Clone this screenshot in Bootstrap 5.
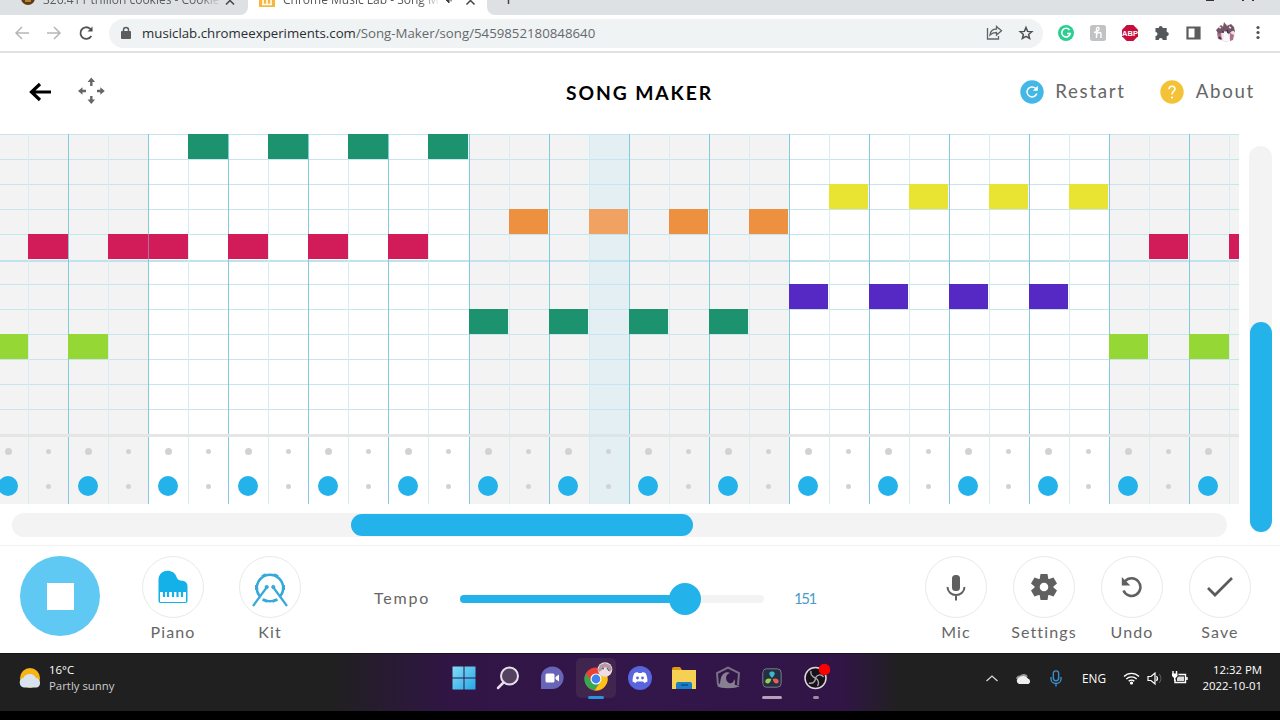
<!DOCTYPE html>
<html lang="en">
<head>
<meta charset="utf-8">
<meta name="viewport" content="width=device-width, initial-scale=1">
<title>Chrome Music Lab - Song Maker</title>
<link href="https://cdn.jsdelivr.net/npm/bootstrap@5.3.0/dist/css/bootstrap.min.css" rel="stylesheet">
<style>
:root { --sky:#23b2ea; --ink:#666; --track:#f3f3f3; }
body { width:1280px; height:720px; overflow:hidden; background:#000; font-family:"Lato","Open Sans",sans-serif; color:var(--ink); line-height:1; }
svg { display:block; flex:none; }
/* browser chrome */
.tabstrip { height:15px; background:#fff; font:12px/16px "Open Sans",sans-serif; color:#5a5d60; }
.tabstrip > div { height:15px; }
.tab-a { width:248px; padding-left:21px; border-radius:0 0 8px 0; background:#dee1e4; }
.tab-b { width:239px; background:#fff; padding-left:11px; color:#55585b; }
.tab-c { background:#dee1e4; border-radius:0 0 0 8px; padding-left:16px; }
.tab-title { height:24px; margin-top:-8.5px; overflow:hidden; white-space:nowrap; -webkit-mask-image:linear-gradient(90deg,#000 88%,transparent); }
.toolbar { height:38px; background:#fff; border-bottom:2px solid #e0e1e2; }
.omnibox { width:934px; height:29px; background:#f0f3f4; margin-left:13px; padding:0 8px 0 11px; font:13.25px/29px "Open Sans",sans-serif; color:#66696c; }
.omnibox b { font-weight:400; color:#2c2e30; }
/* app */
.app-head { height:81px; background:#fff; padding:0 25px 6px 28px; }
.app-title { color:#000; font-size:19.3px; font-weight:700; letter-spacing:1.9px; margin-left:460px; margin-top:5px; }
.head-link { font-size:18.7px; letter-spacing:1.7px; margin-top:3px; }
.restart { margin:-1px 34px 0 11px; }
.about { margin:-1px 0 0 12px; }
.song { height:411px; background:#fff; }
.stage { width:1239px; }
.roll { position:relative; height:370px; overflow:hidden; }
.cells { display:grid; margin-left:-11.7px; width:1281px; grid-template-columns:repeat(32,40.02px); grid-template-rows:repeat(12,25px) 2.5px 35px 32.5px; height:370px; }
.bar-shade { grid-row:1/-1; background:#f3f3f3; }
.row-line { grid-column:1/-1; border-top:1px solid #c6e6ee; height:1px; }
.row-line.octave { border-top:2px solid #bfe2ee; height:2px; margin-top:1px; }
.row-line.split { border-top:3px solid #e5e5e5; height:3px; }
.beat { grid-row:1/-1; width:1px; background:#d6edf2; }
.beat.strong { background:#83cbdc; }
.note { margin:.3px .3px 0 0; }
.playhead { grid-row:1/-1; background:rgba(190,229,247,.28); }
.dot { border-radius:50%; background:#d2d2d2; align-self:center; justify-self:center; }
.hit { width:20px; height:20px; background:var(--sky); }
.dot-l { width:7px; height:7px; } .dot-s { width:5px; height:5px; }
.hbar { width:1215px; height:24px; margin:9px 0 0 12px; background:var(--track); padding:1px 0 1px 339px; }
.hbar div { width:342px; height:22px; background:var(--sky); }
.vbar { width:23px; height:386px; margin:12px 0 0 10px; background:var(--track); padding:176px .5px 0; }
.vbar div { height:210px; background:var(--sky); }
.controls { height:108px; background:#fff; border-top:1px solid #f1f1f1; padding:10px 29px 0 20px; }
.stop { width:80px; height:80px; background:#60c9f3; }
.stop div { width:27px; height:27px; background:#fff; }
.tool { width:62px; font-size:16px; letter-spacing:1.15px; white-space:nowrap; }
.ring { width:62px; height:62px; border:1px solid #e9e9e9; margin-bottom:6px; }
.tempo { font-size:16px; letter-spacing:1.8px; height:86px; margin-left:73px; }
.tempo-name { width:86px; margin-top:-3px; }
.bpm { color:#4a9cc9; font-size:15px; margin:-1px 0 0 30px; letter-spacing:-1.5px; }
.slider { position:relative; width:304px; height:8px; background:var(--track); }
.slider .fill { height:8px; background:var(--sky); }
.slider .knob { position:absolute; top:-12px; width:32px; height:32px; background:var(--sky); }
/* Windows taskbar */
.taskbar { height:58px; color:#fff; font:11.4px/16px "Open Sans",sans-serif; background:linear-gradient(90deg,#202020 330px,#301545 450px,#33164a 640px,#311547 840px,#202020 900px); border-top:1px solid #181318; padding-bottom:10px; }
.weather { width:441.5px; padding-left:19px; }
.app { position:relative; width:44.1px; height:40px; }
.app.live { background:#40254f; border-radius:5px; width:40.1px; margin:0 2px; }
.under { position:absolute; bottom:-1px; left:50%; height:3px; border-radius:2px; transform:translateX(-50%); }
.clock { width:74px; }
.tray { padding-right:18px; }
.lang { margin:0 16px 0 17px; font-size:11.8px; }
</style>
</head>
<body class="d-flex flex-column">

<div class="tabstrip d-flex flex-shrink-0">
  <div class="tab-a d-flex overflow-hidden">
    <svg width="14" height="6" viewBox="0 0 14 6"><path d="M0-2a7 7 0 0 0 14 0z" fill="#5b3b18"/><path d="M4 0h6v2H4z" fill="#b98231"/></svg>
    <span class="tab-title ms-2" style="width:178px">326.411 trillion cookies - Cookie</span>
    <svg width="14" height="7" viewBox="-2 0 14 7"><path d="M3 4.500l4-4 4 4" fill="none" stroke="#444" stroke-width="1.500"/></svg>
  </div>
  <div class="tab-b d-flex overflow-hidden">
    <svg width="16" height="8" viewBox="0 0 16 8"><path d="M0 0h16v7H0z" fill="#f5b83d"/><path d="M3 4.500h10M4 0v4M8 0v4M12 0v4" stroke="#fff" stroke-width="1.500"/></svg>
    <span class="tab-title ms-2" style="width:157px">Chrome Music Lab - Song M</span>
    <svg class="ms-1" width="34" height="7" viewBox="0 0 34 7"><path d="M2 0h3v3zM7 0v1.500" fill="#333" stroke="#444"/><path d="M22.500 4.500l4-4 4 4" fill="none" stroke="#444" stroke-width="1.500"/></svg>
  </div>
  <div class="tab-c flex-grow-1 d-flex">
    <svg width="770" height="6" viewBox="0 0 770 6"><path d="M5.500 0v4" stroke="#444" stroke-width="1.500"/><path d="M703 0h8M740 0v1M750 0v1" stroke="#333" stroke-width="2"/></svg>
  </div>
</div>

<div class="toolbar d-flex align-items-center flex-shrink-0">
  <svg width="96" height="20" viewBox="0 0 96 20" fill="none" stroke="#b4b6b8" stroke-width="1.500"><path d="M29 10H16m6-6-6 6 6 6M47 10h13m-6-6 6 6-6 6"/><path d="M91.300 13A5.800 5.800 0 1 1 90 5.600l2 2" stroke="#505356" stroke-width="1.800"/><path d="M92.500 3.500v5h-5z" fill="#505356" stroke="none"/></svg>
  <div class="omnibox rounded-pill d-flex align-items-center">
    <svg width="12" height="14" viewBox="0 0 12 14" style="margin-right:10px"><path d="M2 5h8a1 1 0 0 1 1 1v6a1 1 0 0 1-1 1H2a1 1 0 0 1-1-1V6a1 1 0 0 1 1-1z" fill="#5a5d60"/><path d="M3.500 6V4a2.500 2.500 0 0 1 5 0v2" fill="none" stroke="#5a5d60" stroke-width="1.500"/></svg>
    <span class="url"><b>musiclab.chromeexperiments.com</b>/Song-Maker/song/5459852180848640</span>
    <svg class="ms-auto" width="50" height="18" viewBox="0 0 50 18" fill="none" stroke="#606366" stroke-width="1.300"><path d="M2.500 4v11h11v-3M5 11c.500-4 3-6 6.500-6V2.500l5 4.300-5 4.200V8.500C9 8.500 7 9 5 11z"/><path d="M41 3.500l1.600 3.900 4.200.3-3.200 2.700 1 4.100-3.600-2.200-3.600 2.200 1-4.100-3.200-2.700 4.200-.3z" stroke="#4d5053" stroke-width="1.500"/></svg>
  </div>
  <svg class="ms-auto" width="222" height="24" viewBox="1058 22 222 24">
    <circle cx="1066" cy="34" r="8" fill="#2cce91"/><path d="M1069.500 31a4.300 4.300 0 1 0 .8 3.500h-3.300" fill="none" stroke="#fff" stroke-width="1.500"/>
    <rect x="1090" y="26" width="16" height="16" rx="2.500" fill="#c1c2c3"/><path d="M1096.500 39v-9c0-2.500 3-2 2.500 0-.500 2-3 3-5 3.500M1096.500 35c2-2 4.500-2 4.500 0v4" fill="none" stroke="#fff" stroke-width="1.400"/>
    <path d="M1126.700 26h6.600l4.700 4.700v6.600l-4.700 4.700h-6.600l-4.700-4.700v-6.600z" fill="#c70d3c"/><text x="1130" y="37" font-size="7.500" font-weight="700" fill="#fff" text-anchor="middle" font-family="Liberation Sans">ABP</text>
    <path d="M1155.500 29h3.200a2 2 0 1 1 4 0h4v4a2 2 0 1 1 0 4.200V41h-4a2 2 0 1 0-4 0h-3.200v-4a2 2 0 1 0 0-4z" fill="#55585a"/>
    <path d="M1187.500 28.500h12v11h-12z" fill="none" stroke="#5a5c5e" stroke-width="2.200"/><path d="M1194.500 28h5v12h-5z" fill="#5a5c5e"/>
    <g><circle cx="1226" cy="34" r="9" fill="#f0dfe5"/><path d="M1216 31l5-5 2 2 1-5 3 4 4-2 3 3 1 5-3-1-3 3-5-3-5 4z" fill="#745466"/><path d="M1217 34l4 1 1 6-4-1zM1230 34l4 2-1 5-3 1z" fill="#ad7088"/><path d="M1224 33l3-1 3 10h-7z" fill="#f8f6ff"/><path d="M1219 28l2 1M1229 28l2 1M1233 32l1 2" stroke="#f3dbe3" stroke-width="1.500"/><path d="M1222 33h2M1227 31l1 3M1219 38l2 2" stroke="#352a42" stroke-width="1.500"/></g>
    <g fill="#505356"><circle cx="1258" cy="28.500" r="1.600"/><circle cx="1258" cy="33.500" r="1.600"/><circle cx="1258" cy="38.500" r="1.600"/></g>
  </svg>
</div>

<header class="app-head d-flex align-items-center flex-shrink-0">
  <svg width="78" height="32" viewBox="28 75 78 32" fill="none"><path d="M51 92H32m8-8-8.500 8 8.500 8" stroke="#000" stroke-width="3.200"/><g stroke="#666" stroke-width="2.400"><path d="M91.300 86v-6M91.300 96v6M86 91h-5M97 91h5"/></g><path d="M91.300 77.500l3.800 4.500h-7.600zM91.300 104l-3.800-4.500h7.600zM78 91l4.500-3.800v7.600zM104.800 91l-4.500-3.800v7.600z" fill="#666"/></svg>
  <div class="app-title">SONG MAKER</div>
  <div class="ms-auto d-flex align-items-center head-link">
    <svg width="24" height="24" viewBox="0 0 24 24"><circle cx="12" cy="12" r="11.700" fill="#43b7e6"/><path d="M16.800 13.500A5 5 0 1 1 15.500 8.300" fill="none" stroke="#fff" stroke-width="1.500"/><path d="M17.800 5.800v5h-5z" fill="#fff"/></svg>
    <span class="restart">Restart</span>
    <svg width="24" height="24" viewBox="0 0 24 24"><circle cx="12" cy="12" r="11.700" fill="#f4c236"/><path d="M9 9.300c0-4 6-4 6-.6 0 2.600-3 2.600-3 5.800" fill="none" stroke="#fff" stroke-width="1.600"/><circle cx="12" cy="17.500" r="1.100" fill="#fff"/></svg>
    <span class="about">About</span>
  </div>
</header>

<main class="song d-flex flex-shrink-0">
  <div class="stage">
    <div class="roll"><div class="cells" id="cells"></div></div>
    <div class="hbar rounded-pill"><div class="rounded-pill"></div></div>
  </div>
  <div class="vbar rounded-pill"><div class="rounded-pill"></div></div>
</main>

<section class="controls d-flex flex-shrink-0">
  <div class="stop rounded-circle d-flex align-items-center justify-content-center"><div></div></div>
  <div class="d-flex" style="gap:35px;margin-left:42px">
    <div class="tool d-flex flex-column align-items-center"><div class="ring rounded-circle d-flex align-items-center justify-content-center">
      <svg width="32" height="34" viewBox="0 0 32 34"><path d="M1.500 31V10C1.500-1.500 17-2 19.500 7c1 3 3 3.500 6 3.700 3 .3 5 2.300 5 5.300v15a2 2 0 0 1-2 2h-25a2 2 0 0 1-2-2z" fill="#14b1e8"/><path d="M3 22h26v10H3z" fill="#fff"/><path d="M7 22v5M11 22v5M16 22v5M20.500 22v5M25 22v5" stroke="#14b1e8" stroke-width="2.200"/></svg></div>Piano</div>
    <div class="tool d-flex flex-column align-items-center"><div class="ring rounded-circle d-flex align-items-center justify-content-center">
      <svg style="margin-top:3px" width="38" height="36" viewBox="0 0 38 36" fill="none" stroke="#36a9da"><path d="M8.500 25A13.200 13.200 0 1 1 29.500 25M12.500 28.500a13.200 13.200 0 0 0 13 0" stroke-width="2.500"/><path d="M11.500 28.500l5 2M26.500 28.500l-5 2M11 5.500l4-2M27 5.500l-4-2M5.300 14v5M32.700 14v5" stroke-width="2.600"/><path d="M2 35L16 16M36 35L22 16" stroke-width="2.200"/><circle cx="15.700" cy="16" r="1.600" fill="#36a9da"/><circle cx="22.300" cy="16" r="1.600" fill="#36a9da"/></svg></div>Kit</div>
  </div>
  <div class="tempo d-flex align-items-center">
    <span class="tempo-name">Tempo</span>
    <div class="slider rounded-pill"><div class="fill rounded-pill" style="width:225px"></div><div class="knob rounded-circle" style="left:209px"></div></div>
    <span class="bpm">151</span>
  </div>
  <div class="ms-auto d-flex" style="gap:26px">
    <div class="tool d-flex flex-column align-items-center"><div class="ring rounded-circle d-flex align-items-center justify-content-center">
      <svg style="margin-top:2px" width="20" height="26" viewBox="0 0 20 26"><rect x="6" y="0" width="8" height="16" rx="3.500" fill="#606060"/><path d="M1.500 12a8.500 8 0 0 0 17 0M10 20v5.500" fill="none" stroke="#606060" stroke-width="2"/></svg></div>Mic</div>
    <div class="tool d-flex flex-column align-items-center"><div class="ring rounded-circle d-flex align-items-center justify-content-center">
      <svg width="26" height="26" viewBox="0 0 26 26"><g fill="#606060"><path id="tooth" d="M9.500 0h7l1 6h-9zM9.500 26h7l1-6h-9z"/><use href="#tooth" transform="rotate(60 13 13)"/><use href="#tooth" transform="rotate(120 13 13)"/></g><circle cx="13" cy="13" r="6.800" fill="none" stroke="#606060" stroke-width="5"/></svg></div>Settings</div>
    <div class="tool d-flex flex-column align-items-center"><div class="ring rounded-circle d-flex align-items-center justify-content-center">
      <svg width="22" height="22" viewBox="0 0 22 22"><path d="M2.500 14.500A8.800 8.800 0 1 0 4 5.300" fill="none" stroke="#606060" stroke-width="2.500"/><path d="M.8 1v8.500h8.500z" fill="#606060"/></svg></div>Undo</div>
    <div class="tool d-flex flex-column align-items-center"><div class="ring rounded-circle d-flex align-items-center justify-content-center">
      <svg width="26" height="20" viewBox="0 0 26 20"><path d="M1 11l7 7L25 1" fill="none" stroke="#5a5a5a" stroke-width="2.700"/></svg></div>Save</div>
  </div>
</section>

<footer class="taskbar d-flex align-items-center flex-shrink-0">
  <div class="weather d-flex align-items-center">
    <svg width="24" height="22" viewBox="0 0 24 22"><circle cx="11" cy="11" r="10" fill="#f7b416"/><path d="M5 20.500a5 5 0 0 1-.5-9.800A7 7 0 0 1 17 11a5 5 0 0 1 1 9.500z" fill="#d9e2ef"/></svg>
    <div style="margin-left:6px">16°C<br><span style="color:#ccc">Partly sunny</span></div>
  </div>
  <div class="app d-flex align-items-center justify-content-center"><svg width="24" height="24" viewBox="0 0 24 24"><defs><linearGradient id="win" x2="1" y2="1"><stop stop-color="#83dcf8"/><stop offset="1" stop-color="#26a7e5"/></linearGradient></defs><path d="M.5.500h11v11H.5zM12.500.500h11v11h-11zM.5 12.500h11v11H.5zM12.500 12.500h11v11h-11z" fill="url(#win)"/></svg></div>
  <div class="app d-flex align-items-center justify-content-center"><svg width="24" height="24" viewBox="0 0 24 24"><circle cx="13.500" cy="10" r="8.500" fill="#54415f" stroke="#e8dfeb" stroke-width="2"/><path d="M7.500 16.500L2 22" stroke="#e8dfeb" stroke-width="2.500" stroke-linecap="round"/></svg></div>
  <div class="app d-flex align-items-center justify-content-center"><svg width="24" height="24" viewBox="0 0 24 24"><path d="M1 23V12a11.300 11.300 0 1 1 11 11z" fill="#6864b8"/><rect x="5.500" y="7.500" width="9" height="9" rx="1.500" fill="#fff"/><path d="M15.500 11l3.500-2.500v7L15.500 13z" fill="#fff"/></svg></div>
  <div class="app live d-flex align-items-center justify-content-center"><svg width="34" height="34" viewBox="0 0 34 34"><circle cx="17" cy="18" r="11.500" fill="#e94335"/><path d="M7 12.200A11.500 11.500 0 0 0 15.500 29.400L21 20.500 17 18 12.500 21z" fill="#34a853"/><path d="M15.500 29.400A11.500 11.500 0 0 0 27.500 13H17l5 7z" fill="#fbc116"/><circle cx="17" cy="18" r="5.500" fill="#fff"/><circle cx="17" cy="18" r="4.400" fill="#3f83f0"/><circle cx="26" cy="8.500" r="7.300" fill="#eadfe3"/><path d="M19 9l2-5 5-2 5 2 2 4-2 3-3-4-2-1-3 3-3 2z" fill="#b797a3"/><path d="M23 7l2 1M28 7l2 3" stroke="#5d455b"/></svg><span class="under" style="width:16px;background:#2b92dc"></span></div>
  <div class="app d-flex align-items-center justify-content-center"><svg width="24" height="24" viewBox="0 0 24 24"><circle cx="12" cy="12" r="12" fill="#5865dd"/><path d="M4.500 15.500c0-3.500.8-6.500 2-8.500l3-1 .7 1h3.600l.7-1 3 1c1.200 2 2 5 2 8.500l-3 1.500-1.500-1.500h-6L7.500 17z" fill="#fff"/><circle cx="9.500" cy="12" r="1.400" fill="#5865dd"/><circle cx="14.500" cy="12" r="1.400" fill="#5865dd"/></svg></div>
  <div class="app d-flex align-items-center justify-content-center"><svg width="26" height="24" viewBox="0 0 26 24"><path d="M1 3a2 2 0 0 1 2-2h6l2 3H1z" fill="#d99b16"/><path d="M1 4h24v19H1z" fill="#f6d052"/><path d="M5 23v-5a2 2 0 0 1 2-2h12a2 2 0 0 1 2 2v5z" fill="#1a7fc7"/><path d="M10 19h7" stroke="#0c4e91" stroke-width="1.500"/></svg></div>
  <div class="app d-flex align-items-center justify-content-center"><svg width="26" height="24" viewBox="0 0 26 24"><path d="M3 19L2 7l11-5.500L24 7l-1 12" fill="none" stroke="#786f83" stroke-width="2"/><path d="M2 20c4-2 3-5 4-8 1-4 5-7 9-5-5 1-5 8-1 10 3 1 5-1 5-4 2 3 0 5 1 6l5 1c-5 3-19 3-23 0z" fill="#888092"/></svg></div>
  <div class="app d-flex align-items-center justify-content-center"><svg width="20" height="20" viewBox="0 0 20 20"><rect x=".8" y=".8" width="18.400" height="18.400" rx="4" fill="#223043" stroke="#807786"/><path d="M10 10C5 5 8 3.500 10 3.500S15 5 10 10z" fill="#40b6c9"/><path d="M9.300 11c-1 6-6 5-6 2.500s3-4 6-2.500z" fill="#98cf51"/><path d="M10.700 11c1 6 6 5 6 2.500s-3-4-6-2.500z" fill="#ef5b4e"/></svg><span class="under" style="width:20px;background:#b4a0bb"></span></div>
  <div class="app d-flex align-items-center justify-content-center"><svg width="28" height="32" viewBox="0 0 28 32"><circle cx="13.500" cy="16" r="10.500" fill="#17121a" stroke="#ddd7df" stroke-width="1.500"/><path d="M9 9c-1 4 2 6 4.500 7 0 4-3 6-6.500 5M13.500 16c2-4 6-4 8-1M13.500 16c3 2 4 5 2 8" fill="none" stroke="#aaa2ae" stroke-width="1.400"/><circle cx="22.500" cy="7.500" r="5.800" fill="#f00"/></svg><span class="under" style="width:6px;background:#9f8ba8"></span></div>

  <div class="tray ms-auto d-flex align-items-center">
    <svg width="80" height="24" viewBox="985 665 80 24"><path d="M986.500 680l5.500-5 5.500 5" fill="none" stroke="#ddd" stroke-width="1.200"/><path d="M1016 678a4 4 0 0 1 4-3.500 5 5 0 0 1 8 1z" fill="#999"/><path d="M1019 683a3.500 3.500 0 0 1 0-6.500 6 6 0 0 1 9 1 3 3 0 0 1 .5 5.500z" fill="#eee"/><rect x="1053.300" y="669.800" width="5.400" height="10" rx="2.700" fill="none" stroke="#3b93d4" stroke-width="1.300"/><path d="M1051 676v2a5 4.500 0 0 0 10 0v-2M1056 682.500v3" fill="none" stroke="#3b93d4" stroke-width="1.300"/></svg>
    <span class="lang">ENG</span>
    <svg width="66" height="20" viewBox="1122.500 667 66 20" fill="none" stroke="#fff" stroke-width="1.400"><path d="M1124.500 675.500a10.500 10.500 0 0 1 15 0M1126.800 678a7.500 7.500 0 0 1 10.400 0M1129.200 680.300a4 4 0 0 1 5.600 0"/><circle cx="1132" cy="682" r=".9" fill="#fff"/><path d="M1148.500 675.500h3l4-3.500v11l-4-3.500h-3z" stroke-width="1.200"/><path d="M1157 675c1.200 1.500 1.200 3.500 0 5" stroke-width="1.200"/><path d="M1159.500 673c2.500 2.500 2.500 6.500 0 9" stroke="#666" stroke-width="1"/><path d="M1179 673.500h7v8h-10.500v-3M1187.500 676v3" stroke-width="1.400"/><path d="M1179 675.500h5.500v4.500h-7v-3z" fill="#ddd" stroke="none"/><path d="M1173.500 670v3M1177 670v3M1175.200 676v4"/><path d="M1172.500 672.500h5.500v2.500l-2 2h-1.500l-2-2z" fill="#fff" stroke="none"/></svg>
    <div class="clock text-end">12:32 PM<br>2022-10-01</div>
  </div>
</footer>
<script>
const cells = document.getElementById('cells');
function put(cls, col, row, extra) {
  const el = document.createElement('div');
  el.className = cls;
  el.style.cssText = (col ? `grid-column:${col};` : '') + (row ? `grid-row:${row};` : '') + (extra || '');
  cells.appendChild(el);
}
// alternating bar shading, eight half-beats to a bar
put('bar-shade', '1/5', '1/-1'); put('bar-shade', '13/21', '1/-1'); put('bar-shade', '29/33', '1/-1');
for (let r = 1; r <= 12; r++) put('row-line' + (r === 6 ? ' octave' : ''), '', r);
for (let c = 1; c <= 32; c++) put('beat' + (c % 2 ? ' strong' : ''), c, '1/-1');
put('row-line split', '', 13);
put('playhead', 16, '1/-1');
// [row, colour, columns]
const notes = [
  [1, '#1d926e', [6, 8, 10, 12]],
  [3, '#e8e431', [22, 24, 26, 28]],
  [4, '#ed9140', [14, 18, 20]],
  [4, '#f0a263', [16]],
  [5, '#d21b59', [2, 4, 5, 7, 9, 11, 30, 32]],
  [7, '#5629c5', [21, 23, 25, 27]],
  [8, '#1d926e', [13, 15, 17, 19]],
  [9, '#95d835', [1, 3, 29, 31]]
];
for (const [row, colour, cols] of notes)
  for (const c of cols) put('note', c, row, `background:${colour}`);
put('beat strong', 5, '5/6', 'opacity:.5');
for (let c = 1; c <= 32; c++) {
  put('dot ' + (c % 2 ? 'dot-l' : 'dot-s'), c, 14, 'margin:-6px .6px 0 0');
  put('dot ' + (c % 2 ? 'hit' : 'dot-s'), c, 15, 'margin:-3px .6px 0 0');
}
</script>
<script src="https://cdn.jsdelivr.net/npm/bootstrap@5.3.0/dist/js/bootstrap.bundle.min.js"></script>
</body>
</html>
